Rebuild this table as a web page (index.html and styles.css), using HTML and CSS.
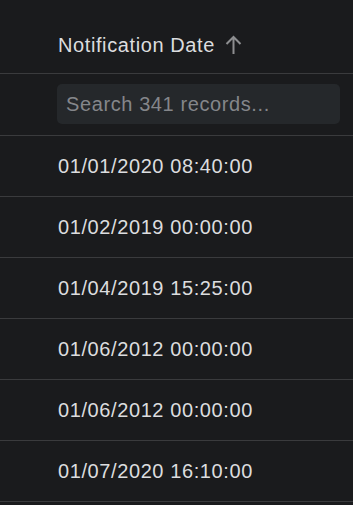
FILE: index.html
```html
<!DOCTYPE html>
<html>
<head>
<meta charset="utf-8">
<link rel="stylesheet" href="styles.css">
</head>
<body>
<div class="table">
  <div class="row head">
    <span class="head-label">Notification Date</span>
    <svg class="sort" width="17" height="20" viewBox="0 0 17 20"><path d="M8.5 19V2M1.5 9L8.5 2L15.5 9" fill="none" stroke="#8d8e90" stroke-width="2"/></svg>
  </div>
  <div class="row search-row">
    <input class="search" type="text" placeholder="Search 341 records...">
  </div>
  <div class="row cell">01/01/2020 08:40:00</div>
  <div class="row cell">01/02/2019 00:00:00</div>
  <div class="row cell">01/04/2019 15:25:00</div>
  <div class="row cell">01/06/2012 00:00:00</div>
  <div class="row cell">01/06/2012 00:00:00</div>
  <div class="row cell">01/07/2020 16:10:00</div>
</div>
</body>
</html>
```
FILE: styles.css
```css
html, body {
  margin: 0;
  padding: 0;
  background: #1a1b1d;
  height: 100%;
  overflow: hidden;
}
.table {
  font-family: "Liberation Sans", Arial, sans-serif;
  font-size: 20px;
  color: #dcdddf;
  letter-spacing: 0.6px;
}
.row {
  display: flex;
  align-items: center;
  padding-left: 58px;
  border-bottom: 1px solid #3a3b3d;
  box-sizing: border-box;
}
.head {
  height: 74px;
  padding-top: 17px;
  gap: 10px;
}
.sort {
  display: block;
}
.search-row {
  height: 62px;
  padding-left: 57px;
  padding-right: 13px;
}
.search {
  flex: 1;
  height: 40px;
  margin-top: -1px;
  box-sizing: border-box;
  border: none;
  border-radius: 5px;
  background: #25282b;
  padding: 0 0 0 9px;
  font-family: "Liberation Sans", Arial, sans-serif;
  font-size: 20px;
  letter-spacing: 0.6px;
  color: #dcdddf;
  outline: none;
}
.search::placeholder {
  color: #84868a;
}
.cell {
  height: 61px;
}
```
